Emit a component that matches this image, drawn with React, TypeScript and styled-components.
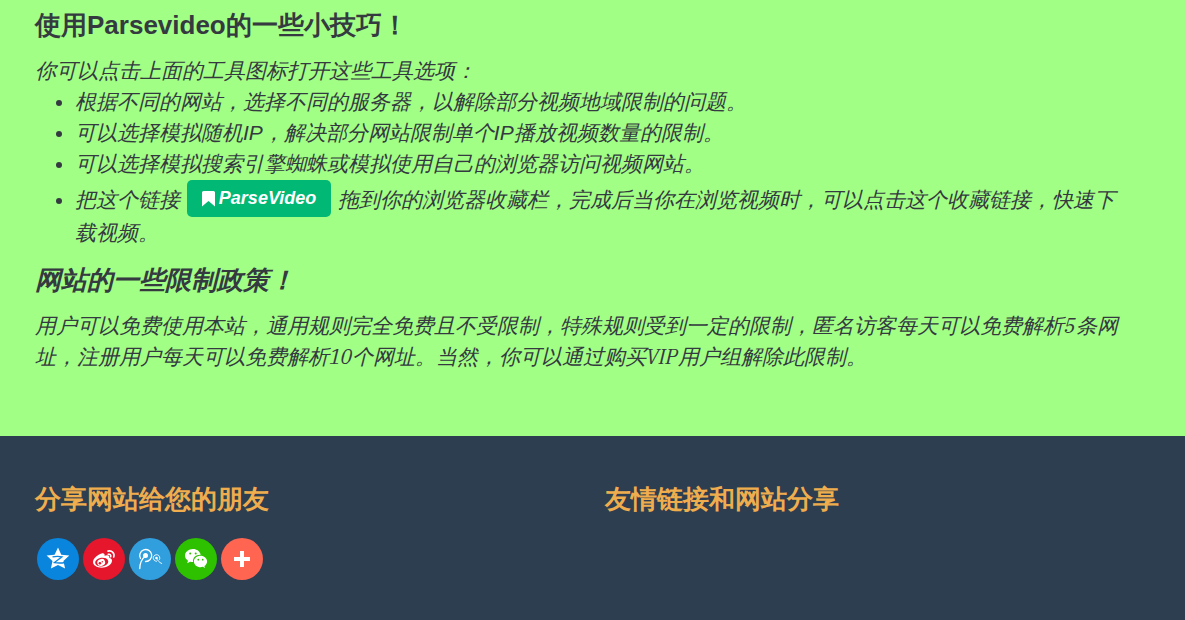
import React from 'react';
import styled, { createGlobalStyle } from 'styled-components';

const GlobalStyle = createGlobalStyle`
  * { box-sizing: border-box; }
  body {
    margin: 0;
    background: #2c3e50;
    color: #343a40;
    font-family: "Liberation Sans", "Droid Sans Fallback", sans-serif;
    font-size: 21px;
    line-height: 31px;
  }
`;

const Guide = styled.main`
  padding: 9px 35px 64px;
  background: #a2ff86;
`;

const Heading = styled.h2`
  margin: 0 0 14px;
  font-size: 26px;
  line-height: 33px;
  font-weight: 700;
`;

const Tips = styled.section`
  font-style: italic;
`;

const Policy = styled.section`
  margin-top: 15px;
  font-family: "IBM Plex Serif", "Liberation Serif", "Droid Sans Fallback", serif;
  font-style: italic;
`;

const Intro = styled.p`
  margin: 0;
  line-height: 30px;
`;

const Text = styled.p`
  margin: 0;
`;

const TipList = styled.ul`
  margin: 0;
  padding: 0 20px 0 40px;
`;

const Bookmarklet = styled.a`
  display: inline-flex;
  align-items: center;
  gap: 4px;
  height: 37px;
  margin: 1px 1px 0;
  padding: 0 15px;
  border-radius: 5px;
  background: #02b875;
  color: #fff;
  font-size: 18px;
  font-weight: 700;
  text-decoration: none;
`;

const Footer = styled.footer`
  display: grid;
  grid-template-columns: 1fr 1fr;
  gap: 25px;
  padding: 47px 35px 40px;
`;

const FooterTitle = styled(Heading)`
  margin-bottom: 22px;
  color: #f0ad4e;
`;

const ShareRow = styled.div`
  display: flex;
  gap: 4px;
  padding-left: 2px;
`;

const ShareButton = styled.button<{ $color: string }>`
  width: 42px;
  height: 42px;
  padding: 0;
  border: 0;
  border-radius: 50%;
  background: ${(p) => p.$color};
  color: #fff;
  cursor: pointer;
  svg { display: block; width: 42px; height: 42px; }
`;

const shares = [
  {
    name: 'QQ空间',
    color: '#0985dd',
    icon: (
      <>
        <path fill="currentColor" d="M21 9.500l3.300 7.200 8 .9-5.900 5.400 1.700 7.600-7.100-3.700-7.100 3.700 1.600-7.600-5.900-5.400 8-.9z" />
        <path fill="none" stroke="#0985dd" strokeWidth="1.300" d="M15.500 18.800c3.500-.6 6.500-.6 9.500 0l-7.600 5.800c3.700.6 7 .6 10.500-.1" />
      </>
    ),
  },
  {
    name: '微博',
    color: '#e6162d',
    icon: (
      <>
        <path fill="currentColor" d="M18.500 15.500c2.200-.8 3.600.2 3 2.300 2.700-1.100 5.400-.8 4.800 2 2.500.8 3.300 2.200 2.500 4.300-1.200 3.300-5.200 5.600-10 5.600-5 0-8.800-2.300-8.800-5.700 0-3.500 5-7.500 8.500-8.500z" />
        <ellipse cx="18.700" cy="24.100" rx="6.600" ry="4.400" fill="#e6162d" transform="rotate(-8 18.700 24.100)" />
        <ellipse cx="18.200" cy="24.400" rx="4" ry="3.400" fill="currentColor" transform="rotate(-18 18.200 24.400)" />
        <circle cx="16.900" cy="25.200" r="1.300" fill="#e6162d" />
        <circle cx="19.300" cy="23.700" r=".7" fill="#e6162d" />
        <path fill="none" stroke="currentColor" strokeWidth="1.600" strokeLinecap="round" d="M25 13.100c4-1 7 2.300 5.700 6M25.300 16.300c1.700-.4 2.900.8 2.400 2.400" />
      </>
    ),
  },
  {
    name: '腾讯微博',
    color: '#319fdd',
    icon: (
      <>
        <circle cx="16.500" cy="17.500" r="2.500" fill="currentColor" />
        <path fill="none" stroke="currentColor" strokeWidth="1.300" strokeLinecap="round" d="M11.500 20.500a6 6 0 1 1 5 3M16.300 18c-3.500 3-5.500 7-5.500 12.500" />
        <circle cx="27.500" cy="20" r="1.300" fill="currentColor" />
        <path fill="none" stroke="currentColor" strokeWidth=".9" strokeLinecap="round" d="M27.500 23.300a3.300 3.300 0 1 1 3-1.800M27.500 20c1 2.500 2.500 4.300 5.200 5.500" />
      </>
    ),
  },
  {
    name: '微信',
    color: '#2dc100',
    icon: (
      <>
        <path fill="currentColor" d="M18 11c-4.500 0-8 3-8 6.600 0 2.100 1.100 3.900 3 5.100l-.8 2.500 2.900-1.500c1.100.3 2 .4 3 .4-.8-4.300 2.900-7.600 7.600-7.300C25 13.400 21.900 11 18 11z" />
        <path fill="currentColor" d="M25.500 17.700c-3.800 0-6.600 2.600-6.600 5.700 0 3.300 3.200 5.800 6.600 5.800.8 0 1.600-.2 2.300-.4l2.200 1.200-.6-2c1.600-1.100 2.700-2.700 2.700-4.600 0-3.100-3-5.700-6.600-5.700z" />
        <g fill="#2dc100"><circle cx="15.200" cy="15.600" r="1" /><circle cx="20.700" cy="15.600" r="1" /><circle cx="23.300" cy="21.700" r=".9" /><circle cx="27.700" cy="21.700" r=".9" /></g>
      </>
    ),
  },
  {
    name: '更多',
    color: '#ff6550',
    icon: <path fill="currentColor" d="M19 13h4v6h6v4h-6v6h-4v-6h-6v-4h6z" />,
  },
];

export default function App() {
  return (
    <>
      <GlobalStyle />
      <Guide>
        <Heading>使用Parsevideo的一些小技巧！</Heading>
        <Tips>
          <Intro>你可以点击上面的工具图标打开这些工具选项：</Intro>
          <TipList>
            <li>根据不同的网站，选择不同的服务器，以解除部分视频地域限制的问题。</li>
            <li>可以选择模拟随机IP，解决部分网站限制单个IP播放视频数量的限制。</li>
            <li>可以选择模拟搜索引擎蜘蛛或模拟使用自己的浏览器访问视频网站。</li>
            <li>
              把这个链接{' '}
              <Bookmarklet href="#parsevideo">
                <svg width="13" height="16" viewBox="0 0 13 16" aria-hidden="true">
                  <path fill="currentColor" d="M1.500 0h10q1.500 0 1.500 1.500V15.500L6.500 10 0 15.500V1.500Q0 0 1.500 0z" />
                </svg>
                ParseVideo
              </Bookmarklet>{' '}
              拖到你的浏览器收藏栏，完成后当你在浏览视频时，可以点击这个收藏链接，快速下载视频。
            </li>
          </TipList>
        </Tips>
        <Policy>
          <Heading>网站的一些限制政策！</Heading>
          <Text>
            用户可以免费使用本站，通用规则完全免费且不受限制，特殊规则受到一定的限制，匿名访客每天可以免费解析5条网址，注册用户每天可以免费解析10个网址。当然，你可以通过购买VIP用户组解除此限制。
          </Text>
        </Policy>
      </Guide>
      <Footer>
        <section>
          <FooterTitle>分享网站给您的朋友</FooterTitle>
          <ShareRow>
            {shares.map((s) => (
              <ShareButton key={s.name} type="button" aria-label={s.name} $color={s.color}>
                <svg viewBox="0 0 42 42" aria-hidden="true">{s.icon}</svg>
              </ShareButton>
            ))}
          </ShareRow>
        </section>
        <section>
          <FooterTitle>友情链接和网站分享</FooterTitle>
        </section>
      </Footer>
    </>
  );
}
